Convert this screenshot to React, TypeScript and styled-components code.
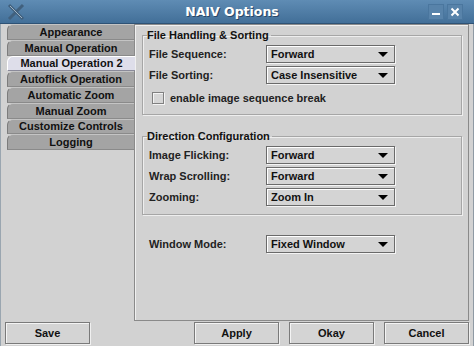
import React from 'react'
import styled, { createGlobalStyle } from 'styled-components'

const GlobalStyle = createGlobalStyle`
  html, body {
    margin: 0;
    padding: 0;
    background: #d2d2d2;
  }
  body {
    font-family: 'Liberation Sans', Arial, sans-serif;
  }
`

const Window = styled.div`
  width: 474px;
  height: 346px;
  display: flex;
  flex-direction: column;
  background: #d2d2d2;
  box-sizing: border-box;
  overflow: hidden;
`

const TitleBar = styled.div`
  height: 23px;
  flex: none;
  display: grid;
  grid-template-columns: 30px 1fr 46px;
  align-items: center;
  background: linear-gradient(#5f8cb4, #426f98);
  border-bottom: 1px solid #2e5275;
`

const TitleText = styled.div`
  text-align: center;
  color: #fff;
  font-family: 'DejaVu Sans', sans-serif;
  font-weight: bold;
  font-size: 12.5px;
  text-shadow: 1px 1px 0 #2a4766;
  padding-left: 6px;
`

const TitleButtons = styled.div`
  display: flex;
  gap: 3px;
`

const TitleButton = styled.div`
  width: 16px;
  height: 16px;
  display: flex;
  align-items: center;
  justify-content: center;
  background: #5883aa;
  border: 1px solid #4a769e;
  box-sizing: border-box;
`

const Body = styled.div`
  flex: 1;
  display: flex;
  flex-direction: column;
  padding: 0 4px 4px 4px;
  border-left: 1px solid #9aa6b0;
  border-right: 1px solid #8f9aa4;
  border-bottom: 1px solid #8f9aa4;
`

const Main = styled.div`
  height: 297px;
  display: flex;
`

const TabColumn = styled.div`
  width: 127px;
  padding-left: 2px;
  display: flex;
  flex-direction: column;
`

const Tab = styled.div<{ $selected?: boolean }>`
  height: 15.75px;
  box-sizing: border-box;
  display: flex;
  align-items: center;
  justify-content: center;
  font-size: 11px;
  font-weight: bold;
  color: #111;
  background: ${p => (p.$selected ? '#dedeea' : '#a4a4a4')};
  border-top: 1px solid ${p => (p.$selected ? '#ffffff' : '#c4c4c4')};
  border-left: 1px solid ${p => (p.$selected ? '#ffffff' : '#7c7c7c')};
  border-bottom: 1px solid ${p => (p.$selected ? '#8a8a9a' : '#8a8a8a')};
  border-top-left-radius: 6px;
  margin-right: ${p => (p.$selected ? '-1px' : '0')};
  position: relative;
  z-index: ${p => (p.$selected ? 1 : 0)};
`

const Panel = styled.div`
  flex: 1;
  border: 1px solid #8a8a8a;
  box-shadow: inset 1px 1px 0 #f0f0f0;
  padding: 4px 6px 0 7px;
  display: flex;
  flex-direction: column;
`

const Group = styled.fieldset<{ $height: number; $gapAbove?: number }>`
  margin: ${p => p.$gapAbove ?? 0}px 0 0 0;
  padding: 3px 6px 0 6px;
  height: ${p => p.$height}px;
  border: 1px solid #a6a6a6;
  box-shadow: 1px 1px 0 #eeeeee, inset 1px 1px 0 #eeeeee;
  box-sizing: border-box;
  display: flex;
  flex-direction: column;
  gap: 3px;
`

const Legend = styled.legend`
  font-size: 11px;
  line-height: 13px;
  font-weight: bold;
  color: #111;
  padding: 0 2px 0 0;
  margin-left: -2px;
`

const Row = styled.div`
  display: grid;
  grid-template-columns: 117px 129px;
  align-items: center;
  height: 18px;
`

const Label = styled.div`
  font-size: 11px;
  font-weight: bold;
  color: #222;
`

const Combo = styled.div`
  height: 18px;
  box-sizing: border-box;
  border: 1px solid #6a6a6a;
  box-shadow: inset 1px 1px 0 #ffffff, 1px 1px 0 #f4f4f4;
  background: #d4d4d4;
  display: flex;
  align-items: center;
  justify-content: space-between;
  padding: 0 6px 0 4px;
  font-size: 11px;
  font-weight: bold;
  color: #111;
`

const Arrow = styled.div`
  width: 0;
  height: 0;
  border-left: 5px solid transparent;
  border-right: 5px solid transparent;
  border-top: 5px solid #000;
`

const CheckRow = styled.label`
  display: flex;
  align-items: center;
  gap: 6px;
  margin-top: 5px;
  padding-left: 3px;
  font-size: 11px;
  font-weight: bold;
  color: #222;
`

const CheckBox = styled.span`
  width: 10px;
  height: 10px;
  border: 1px solid #808080;
  box-shadow: inset 1px 1px 0 #f4f4f4, 1px 1px 0 #f4f4f4;
  background: #d6d6d6;
`

const StandaloneRow = styled(Row)`
  margin-left: 7px;
  margin-top: 20px;
`

const ButtonBar = styled.div`
  display: flex;
  gap: 10px;
  margin-top: 1px;
`

const Spacer = styled.div`
  flex: 1;
`

const Button = styled.div`
  width: 85px;
  height: 22px;
  box-sizing: border-box;
  display: flex;
  align-items: center;
  justify-content: center;
  border: 1px solid #7a7a7a;
  box-shadow: inset 1px 1px 0 #f4f4f4, 1px 1px 0 #f0f0f0;
  background: #d4d4d4;
  font-size: 11px;
  font-weight: bold;
  color: #111;
`

const tabs = [
  'Appearance',
  'Manual Operation',
  'Manual Operation 2',
  'Autoflick Operation',
  'Automatic Zoom',
  'Manual Zoom',
  'Customize Controls',
  'Logging',
]

const SelectRow = ({ label, value }: { label: string; value: string }) => (
  <Row>
    <Label>{label}</Label>
    <Combo>
      {value}
      <Arrow />
    </Combo>
  </Row>
)

export default function App() {
  return (
    <Window>
      <GlobalStyle />
      <TitleBar>
        <svg width="22" height="18" viewBox="0 0 22 18" style={{ marginLeft: 6 }}>
          <path d="M3 2 L17 16 M17 2 L3 16" stroke="#41607d" strokeWidth="3" />
          <path d="M4 3 L16 15" stroke="#9fb3c4" strokeWidth="1" />
        </svg>
        <TitleText>NAIV Options</TitleText>
        <TitleButtons>
          <TitleButton>
            <svg width="10" height="10" viewBox="0 0 10 10">
              <rect x="1" y="6" width="8" height="2" fill="#fff" />
            </svg>
          </TitleButton>
          <TitleButton>
            <svg width="10" height="10" viewBox="0 0 10 10">
              <path d="M1.5 1.5 L8.5 8.5 M8.5 1.5 L1.5 8.5" stroke="#fff" strokeWidth="2" />
            </svg>
          </TitleButton>
        </TitleButtons>
      </TitleBar>
      <Body>
        <Main>
          <TabColumn>
            {tabs.map((t, i) => (
              <Tab key={t} $selected={i === 2}>
                {t}
              </Tab>
            ))}
          </TabColumn>
          <Panel>
            <Group $height={86}>
              <Legend>File Handling &amp; Sorting</Legend>
              <SelectRow label="File Sequence:" value="Forward" />
              <SelectRow label="File Sorting:" value="Case Insensitive" />
              <CheckRow>
                <CheckBox />
                enable image sequence break
              </CheckRow>
            </Group>
            <Group $height={85} $gapAbove={15}>
              <Legend>Direction Configuration</Legend>
              <SelectRow label="Image Flicking:" value="Forward" />
              <SelectRow label="Wrap Scrolling:" value="Forward" />
              <SelectRow label="Zooming:" value="Zoom In" />
            </Group>
            <StandaloneRow>
              <Label>Window Mode:</Label>
              <Combo>
                Fixed Window
                <Arrow />
              </Combo>
            </StandaloneRow>
          </Panel>
        </Main>
        <ButtonBar>
          <Button>Save</Button>
          <Spacer />
          <Button>Apply</Button>
          <Button>Okay</Button>
          <Button>Cancel</Button>
        </ButtonBar>
      </Body>
    </Window>
  )
}
